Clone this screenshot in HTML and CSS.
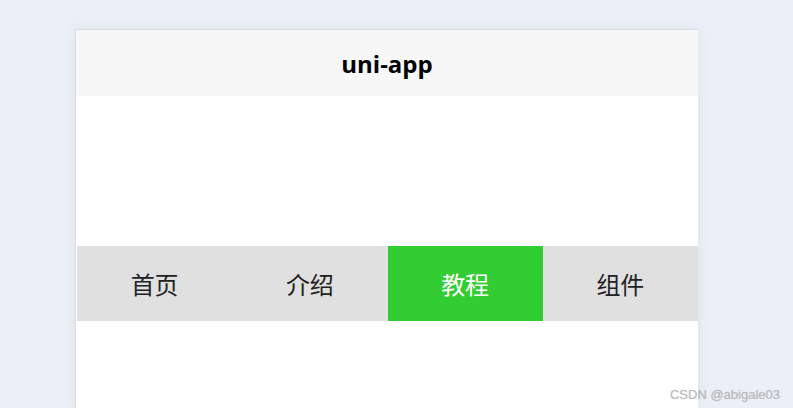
FILE: index.html
```html
<!DOCTYPE html>
<html lang="zh-CN">
<head>
    <meta charset="UTF-8">
    <meta name="viewport" content="width=device-width, initial-scale=1.0">
    <title>uni-app</title>
    <link rel="stylesheet" href="styles.css">
</head>
<body>
    <div class="phone">
        <div class="nav-header">
            <h1>uni-app</h1>
        </div>

        <div class="spacer"></div>

        <div class="tabs">
            <div class="tab">首页</div>
            <div class="tab">介绍</div>
            <div class="tab active">教程</div>
            <div class="tab">组件</div>
        </div>
    </div>

    <div class="watermark">CSDN @abigale03</div>
</body>
</html>
```

FILE: styles.css
```css
html, body {
    height: 100%;
}
body {
    background-color: #ebeff7;
    margin: 0;
    padding: 0;
    overflow: hidden;
    font-family: "Open Sans", "Noto Sans CJK SC", sans-serif;
}
.phone {
    margin: 29px 0 0 75px;
    width: 622px;
    height: 378px;
    background-color: white;
    border-top: 1px solid #dcdcdc;
    border-left: 1px solid #dcdcdc;
    box-shadow: 0 0 12px rgba(0, 0, 0, 0.06); /* soft frame shadow */
}
.nav-header {
    height: 66px;
    background-color: #f7f7f7;
    display: flex;
    align-items: center;
    justify-content: center;
}
.nav-header h1 {
    font-size: 24px;
    font-weight: bold;
    color: black;
    margin: 0;
}
.spacer {
    height: 150px;
}
.tabs {
    display: flex;
    height: 75px;
    margin-left: 1px;
    background-color: #e0e0e0;
}
.tab {
    flex: 1;
    display: flex;
    align-items: center;
    justify-content: center;
    font-family: "Noto Sans CJK SC", sans-serif;
    font-size: 24px;
    color: #222;
}
.tab.active {
    background-color: #32cd32; /* limegreen */
    color: white;
}
.watermark {
    position: absolute;
    right: 13px;
    bottom: 6px;
    font-family: "Liberation Sans", sans-serif;
    font-size: 13px;
    color: #bdbdbd;
    text-shadow: 0 0 1px rgba(0, 0, 0, 0.2);
}
```
